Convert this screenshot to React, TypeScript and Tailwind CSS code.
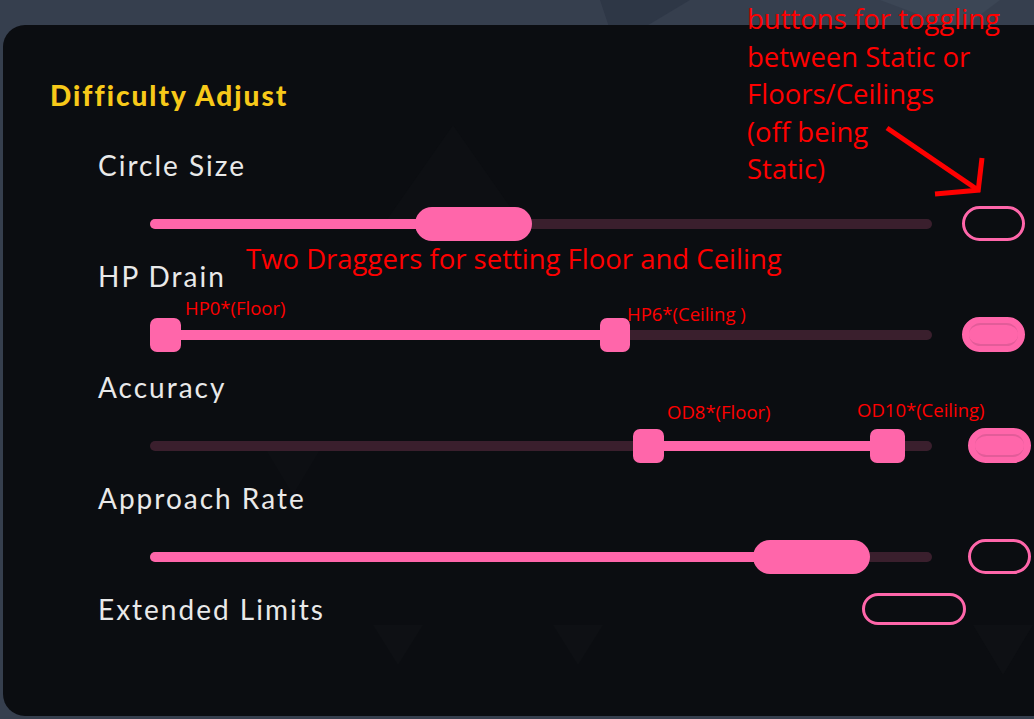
import React from 'react';

type Range = { from: number; to: number };

// Slider track is 782px wide; thumb offsets are in px from the track start
const TRACK_W = 782;

const Thumb: React.FC<{ left: number; width: number; round?: boolean }> = ({ left, width, round }) => (
  <div
    className={`absolute top-0 h-[34px] bg-[#ff66aa] ${round ? 'rounded-full' : 'rounded-[7px]'}`}
    style={{ left, width }}
  />
);

const Slider: React.FC<{ fill: Range; thumbs: { left: number; width: number }[]; round?: boolean }> = ({ fill, thumbs, round }) => (
  <div className="relative h-[34px]" style={{ width: TRACK_W }}>
    <div className="absolute left-0 right-0 top-[12px] h-[10px] rounded-full bg-[#3a1f2d]" />
    <div
      className="absolute top-[12px] h-[10px] rounded-full bg-[#ff66aa]"
      style={{ left: fill.from, width: fill.to - fill.from }}
    />
    {thumbs.map((t, i) => (
      <Thumb key={i} left={t.left} width={t.width} round={round} />
    ))}
  </div>
);

const Toggle: React.FC<{ on?: boolean; wide?: boolean }> = ({ on, wide }) => (
  <div
    className={`relative rounded-full border-[3px] border-[#ff66aa] ${wide ? 'h-[32px] w-[104px]' : 'h-[35px] w-[63px]'} ${on ? 'bg-[#ff66aa]' : 'bg-[#0b0d11]'}`}
  >
    {on && <div className="absolute inset-x-[4px] inset-y-[3px] rounded-full border-y-2 border-[#e25c99]" />}
  </div>
);

const Label: React.FC<{ children: React.ReactNode }> = ({ children }) => (
  <div className="h-[34px] text-[28px] leading-[34px] text-[#e9e9e9] tracking-[2px]">{children}</div>
);

const Note: React.FC<{ className: string; children: React.ReactNode }> = ({ className, children }) => (
  <div className={`absolute whitespace-nowrap text-[#ff0000] font-['Open_Sans',sans-serif] ${className}`}>{children}</div>
);

export default function App() {
  return (
    <div className="relative h-[719px] w-[1034px] overflow-hidden bg-[#363f4e] font-['Lato',sans-serif]">
      {/* backdrop shapes behind the panel */}
      <svg className="absolute left-0 top-0" width="1034" height="30">
        <polygon points="600,0 690,0 640,30 610,30" fill="#2e3746" />
        <polygon points="880,0 1000,0 960,30" fill="#3c4655" />
      </svg>

      <div className="relative ml-[3px] mt-[25px] h-[691px] rounded-l-[22px] bg-[#0b0d11] pl-[47px] pt-[54px]">
        {/* faint triangles */}
        <svg className="pointer-events-none absolute inset-0" width="1031" height="691">
          <polygon points="370,600 420,600 395,640" fill="#0e1014" />
          <polygon points="550,600 600,600 575,640" fill="#0e1014" />
          <polygon points="970,600 1030,600 1000,650" fill="#0e1014" />
          <polygon points="260,420 320,420 290,470" fill="#0d0f13" />
          <polygon points="450,100 520,200 380,200" fill="#0d0f13" />
        </svg>

        <div className="relative">
          <div className="h-[32px] text-[28px] font-black leading-[32px] tracking-[2px] text-[#f7c919]">Difficulty Adjust</div>

          <div className="mt-[37px] flex flex-col pl-[48px]">
            <Label>Circle Size</Label>
            <div className="mt-[24px] flex items-center pl-[52px]">
              <Slider round fill={{ from: 0, to: 300 }} thumbs={[{ left: 265, width: 117 }]} />
              <div className="ml-[30px]"><Toggle /></div>
            </div>

            <div className="mt-[18px]"><Label>HP Drain</Label></div>
            <div className="mt-[24px] flex items-center pl-[52px]">
              <Slider fill={{ from: 0, to: 465 }} thumbs={[{ left: 0, width: 31 }, { left: 450, width: 30 }]} />
              <div className="ml-[30px]"><Toggle on /></div>
            </div>

            <div className="mt-[18px]"><Label>Accuracy</Label></div>
            <div className="mt-[24px] flex items-center pl-[52px]">
              <Slider fill={{ from: 483, to: 740 }} thumbs={[{ left: 483, width: 31 }, { left: 720, width: 35 }]} />
              <div className="ml-[36px]"><Toggle on /></div>
            </div>

            <div className="mt-[18px]"><Label>Approach Rate</Label></div>
            <div className="mt-[24px] flex items-center pl-[52px]">
              <Slider round fill={{ from: 0, to: 650 }} thumbs={[{ left: 603, width: 117 }]} />
              <div className="ml-[36px]"><Toggle /></div>
            </div>

            <div className="mt-[18px] flex w-[868px] items-center justify-between">
              <Label>Extended Limits</Label>
              <Toggle wide />
            </div>
          </div>
        </div>
      </div>

      {/* annotations */}
      <Note className="left-[747px] top-0 text-[27.5px] leading-[37.5px]">
        buttons for toggling
        <br />
        between Static or
        <br />
        Floors/Ceilings
        <br />
        (off being
        <br />
        Static)
      </Note>
      <svg className="absolute left-[880px] top-[120px]" width="110" height="80">
        <line x1="7" y1="8" x2="98" y2="70" stroke="#ff0000" strokeWidth="5" />
        <line x1="102" y1="38" x2="98" y2="72" stroke="#ff0000" strokeWidth="5" />
        <line x1="55" y1="74" x2="100" y2="70" stroke="#ff0000" strokeWidth="5" />
      </svg>
      <Note className="left-[246px] top-[242px] text-[27.5px] leading-[34px]">Two Draggers for setting Floor and Ceiling</Note>
      <Note className="left-[185px] top-[296px] text-[18.5px] leading-[24px]">HP0*(Floor)</Note>
      <Note className="left-[627px] top-[302px] text-[18.5px] leading-[24px]">HP6*(Ceiling )</Note>
      <Note className="left-[667px] top-[400px] text-[18.5px] leading-[24px]">OD8*(Floor)</Note>
      <Note className="left-[857px] top-[398px] text-[18.5px] leading-[24px]">OD10*(Ceiling)</Note>
    </div>
  );
}
